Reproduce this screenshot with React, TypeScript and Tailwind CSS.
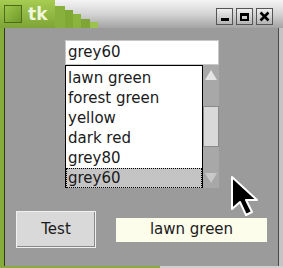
const items = ['lawn green', 'forest green', 'yellow', 'dark red', 'grey80', 'grey60'];

function Cursor() {
  return (
    <svg width="34" height="44" viewBox="0 0 34 44" className="absolute left-[230px] top-[175px]">
      <path d="M2 2 L2 34 L10 27 L16 40 L22 37 L16 25 L27 25 Z" fill="#000" stroke="#fff" strokeWidth="2" strokeLinejoin="round" />
    </svg>
  );
}

function TitleButton({ kind }: { kind: 'min' | 'max' | 'close' }) {
  return (
    <div className="flex h-[17px] w-[17px] items-center justify-center border border-[#555] bg-gradient-to-b from-[#eeeeee] to-[#b5b5b5]">
      {kind === 'min' && <div className="mt-[6px] h-[3px] w-[8px] bg-black" />}
      {kind === 'max' && <div className="h-[8px] w-[9px] border-2 border-t-[3px] border-black" />}
      {kind === 'close' && (
        <svg width="11" height="11" viewBox="0 0 11 11">
          <path d="M1.5 1.5 L9.5 9.5 M9.5 1.5 L1.5 9.5" stroke="#000" strokeWidth="2.6" />
        </svg>
      )}
    </div>
  );
}

export default function App() {
  return (
    <div className="relative h-[268px] w-[283px] overflow-hidden bg-[#1e1e1e]" style={{ fontFamily: '"DejaVu Sans", sans-serif' }}>
      {/* title bar */}
      <div className="relative flex h-[28px] bg-gradient-to-b from-[#f4f4f4] via-[#d4d4d4] to-[#a4a4a4]">
        <div className="flex h-full w-[55px] items-center gap-[6px] bg-gradient-to-b from-[#a6cc52] to-[#7ea536] pl-[4px]">
          <div className="h-[18px] w-[18px] border border-[#4e6b1c] bg-gradient-to-br from-[#9cc64a] to-[#6f9a2a]" />
          <span className="text-[17px] font-bold leading-none text-[#eef6dc]">tk</span>
        </div>
        <div className="absolute left-[55px] top-[6px] h-[22px] w-[10px] bg-[#88b03c]" />
        <div className="absolute left-[65px] top-[10px] h-[18px] w-[8px] bg-[#7fa835]" />
        <div className="absolute left-[73px] top-[14px] h-[14px] w-[8px] bg-[#8ab43e]" />
        <div className="absolute left-[81px] top-[19px] h-[9px] w-[9px] bg-[#7ea536]" />
        <div className="absolute left-[90px] top-[22px] h-[6px] w-[8px] bg-[#9ac24c]" />
        <div className="ml-auto mr-[10px] mt-[8px] flex gap-[3px]">
          <TitleButton kind="min" />
          <TitleButton kind="max" />
          <TitleButton kind="close" />
        </div>
      </div>

      {/* window body */}
      <div className="flex h-[238px]">
        <div className="w-[4px] bg-[#86ad3c]" />
        <div className="w-[1px] bg-[#2e3a1a]" />
        <div className="relative flex-1 bg-[#9b9b9b]">
          <div className="ml-[60px] mt-[12px] w-[154px]">
            <div className="flex h-[25px] items-center border border-[#c8c8c8] bg-white pl-[2px] text-[15px] text-[#1a1a1a]">grey60</div>
            <div className="flex h-[123px]">
              <div className="w-[138px] border border-black bg-white pt-[2px]">
                {items.map((it, i) => (
                  <div
                    key={it}
                    className={
                      i === 5
                        ? 'h-[20px] border border-dotted border-black bg-[#c4c4c4] pl-[1px] text-[15px] leading-[18px] text-[#1a1a1a]'
                        : 'h-[20px] pl-[2px] text-[15px] leading-[20px] text-[#1a1a1a]'
                    }
                  >
                    {it}
                  </div>
                ))}
              </div>
              <div className="flex w-[16px] flex-col bg-[#a8a8a8]">
                <div className="flex h-[15px] items-end justify-center">
                  <div className="h-0 w-0 border-x-[6px] border-b-[10px] border-x-transparent border-b-[#e4e4e4]" />
                </div>
                <div className="mt-[26px] h-[41px] border border-[#8a8a8a] bg-[#d9d9d9]" />
                <div className="mt-auto flex h-[15px] items-start justify-center">
                  <div className="h-0 w-0 border-x-[6px] border-t-[10px] border-x-transparent border-t-[#c8c8c8]" />
                </div>
              </div>
            </div>
          </div>
          <div className="mt-[23px] flex items-center">
            <div className="ml-[11px] flex h-[37px] w-[80px] items-center justify-center border border-[#f0f0f0] bg-[#d9d9d9] text-[15px] text-[#1a1a1a] shadow-[inset_-1px_-1px_0_#888]">
              Test
            </div>
            <div className="ml-[20px] flex h-[24px] w-[151px] items-center justify-center bg-[#fdfdeb] text-[15px] text-[#1a1a1a]">
              lawn green
            </div>
          </div>
        </div>
        <div className="w-[1px] bg-[#4a4a4a]" />
        <div className="w-[4px] bg-[#c4c4c4]" />
      </div>
      <div className="flex h-[3px]">
        <div className="w-[160px] bg-[#86ad3c]" />
        <div className="flex-1 bg-[#d0d0d0]" />
      </div>
      <Cursor />
    </div>
  );
}
